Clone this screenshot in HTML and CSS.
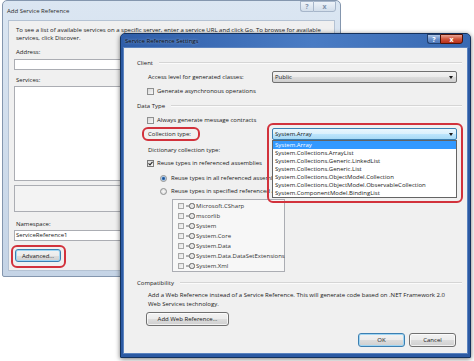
FILE: index.html
```html
<!DOCTYPE html>
<html>
    <head>
        <meta charset="utf-8">
        <link rel="stylesheet" href="styles.css">
    </head>
    <body>
        <div id="desktop">
            <div class="window back">
                <div class="titlebar">
                    <span class="title">Add Service Reference</span>
                    <div class="caption-btns">
                        <span class="cap-help">?</span>
                        <span class="cap-close">x</span>
                    </div>
                </div>
                <div class="client">
                    <p class="intro">To see a list of available services on a specific server, enter a service URL and click Go. To browse for available<br>services, click Discover.</p>
                    <div class="field-label address-label">Address:</div>
                    <div class="textbox address"></div>
                    <div class="field-label services-label">Services:</div>
                    <div class="listbox services"></div>
                    <div class="listbox status"></div>
                    <div class="field-label namespace-label">Namespace:</div>
                    <div class="textbox namespace">ServiceReference1</div>
                    <div class="callout-btn">
                        <button class="btn default advanced">Advanced...</button>
                    </div>
                </div>
            </div>

            <div class="window front">
                <div class="titlebar">
                    <span class="title">Service Reference Settings</span>
                    <div class="caption-btns">
                        <span class="cap-help">?</span>
                        <span class="cap-close">x</span>
                    </div>
                </div>
                <div class="client">
                    <div class="group-head"><span>Client</span><i class="rule"></i></div>
                    <div class="field-row">
                        <span class="label">Access level for generated classes:</span>
                        <div class="combo"><span>Public</span><i class="arrow"></i></div>
                    </div>
                    <div class="check-row"><i class="checkbox"></i><span>Generate asynchronous operations</span></div>

                    <div class="group-head data-type"><span>Data Type</span><i class="rule"></i></div>
                    <div class="check-row"><i class="checkbox"></i><span>Always generate message contracts</span></div>
                    <div class="field-row">
                        <span class="label"><span class="callout">Collection type:</span></span>
                        <div class="combo-wrap">
                            <div class="combo active"><span>System.Array</span><i class="arrow"></i></div>
                            <ul class="dropdown">
                                <li class="selected">System.Array</li>
                                <li>System.Collections.ArrayList</li>
                                <li>System.Collections.Generic.LinkedList</li>
                                <li>System.Collections.Generic.List</li>
                                <li>System.Collections.ObjectModel.Collection</li>
                                <li>System.Collections.ObjectModel.ObservableCollection</li>
                                <li>System.ComponentModel.BindingList</li>
                            </ul>
                            <i class="callout-ring"></i>
                        </div>
                    </div>
                    <div class="field-row dictionary">
                        <span class="label">Dictionary collection type:</span>
                        <div class="combo"><span></span><i class="arrow"></i></div>
                    </div>
                    <div class="check-row reuse">
                        <i class="checkbox checked"><svg width="5" height="5" viewBox="0 0 5 5"><path d="M0.5 2.4 L2 3.9 L4.5 0.8" fill="none" stroke="#2b2b2b" stroke-width="1.1"/></svg></i>
                        <span>Reuse types in referenced assemblies</span>
                    </div>
                    <div class="radio-row all"><i class="radio on"></i><span>Reuse types in all referenced assemblies</span></div>
                    <div class="radio-row specified"><i class="radio"></i><span>Reuse types in specified referenced assemblies</span></div>
                    <ul class="assemblies">
                        <li><i class="checkbox"></i><svg class="ref-icon" width="9" height="6" viewBox="0 0 9 6"><path d="M0 3 H3" stroke="#666" stroke-width="1"/><rect x="3.5" y="0.5" width="5" height="5" rx="2" fill="#e4e4e4" stroke="#666"/></svg><span>Microsoft.CSharp</span></li>
                        <li><i class="checkbox"></i><svg class="ref-icon" width="9" height="6" viewBox="0 0 9 6"><path d="M0 3 H3" stroke="#666" stroke-width="1"/><rect x="3.5" y="0.5" width="5" height="5" rx="2" fill="#e4e4e4" stroke="#666"/></svg><span>mscorlib</span></li>
                        <li><i class="checkbox"></i><svg class="ref-icon" width="9" height="6" viewBox="0 0 9 6"><path d="M0 3 H3" stroke="#666" stroke-width="1"/><rect x="3.5" y="0.5" width="5" height="5" rx="2" fill="#e4e4e4" stroke="#666"/></svg><span>System</span></li>
                        <li><i class="checkbox"></i><svg class="ref-icon" width="9" height="6" viewBox="0 0 9 6"><path d="M0 3 H3" stroke="#666" stroke-width="1"/><rect x="3.5" y="0.5" width="5" height="5" rx="2" fill="#e4e4e4" stroke="#666"/></svg><span>System.Core</span></li>
                        <li><i class="checkbox"></i><svg class="ref-icon" width="9" height="6" viewBox="0 0 9 6"><path d="M0 3 H3" stroke="#666" stroke-width="1"/><rect x="3.5" y="0.5" width="5" height="5" rx="2" fill="#e4e4e4" stroke="#666"/></svg><span>System.Data</span></li>
                        <li><i class="checkbox"></i><svg class="ref-icon" width="9" height="6" viewBox="0 0 9 6"><path d="M0 3 H3" stroke="#666" stroke-width="1"/><rect x="3.5" y="0.5" width="5" height="5" rx="2" fill="#e4e4e4" stroke="#666"/></svg><span>System.Data.DataSetExtensions</span></li>
                        <li><i class="checkbox"></i><svg class="ref-icon" width="9" height="6" viewBox="0 0 9 6"><path d="M0 3 H3" stroke="#666" stroke-width="1"/><rect x="3.5" y="0.5" width="5" height="5" rx="2" fill="#e4e4e4" stroke="#666"/></svg><span>System.Xml</span></li>
                    </ul>

                    <div class="group-head compat"><span>Compatibility</span><i class="rule"></i></div>
                    <p class="compat-text">Add a Web Reference instead of a Service Reference. This will generate code based on .NET Framework 2.0<br>Web Services technology.</p>
                    <button class="btn add-web">Add Web Reference...</button>

                    <div class="dialog-footer">
                        <button class="btn default">OK</button>
                        <button class="btn">Cancel</button>
                    </div>
                </div>
            </div>
        </div>
    </body>
</html>
```

FILE: styles.css
```css
body{
    margin:0;
    background:#fff;
    font-family: 'Open Sans', 'Noto Sans', sans-serif;
    font-size:6px;
    color:#1a1a1a;
}

#desktop{
    position: relative;
    width:474px;
    height:361px;
    overflow: hidden;
}

.window{
    position: absolute;
    display: flex;
    flex-direction: column;
    box-sizing: border-box;
}

.titlebar{
    display: flex;
    align-items: center;
    flex: none;
}

.caption-btns{
    display: flex;
    align-self: flex-start;
    margin-left: auto;
}

.caption-btns > span{
    box-sizing: border-box;
    display: flex;
    align-items: center;
    justify-content: center;
    font-size:7px;
    font-weight: 700;
    line-height: 1;
}

/* back window: inactive frame */

.back{
    left:2px;
    top:0;
    width:339px;
    height:277px;
    background: linear-gradient(#dbe6f2, #c5d4e6);
    border:1px solid #8496ae;
    border-radius: 5px 5px 2px 2px;
    padding: 0 5px 5px;
}

.back .titlebar{
    height:19px;
}

.back .title{
    margin-left:-1px;
    color:#2a2a2a;
}

.back .caption-btns{
    margin-right:-1px;
}

.back .caption-btns > span{
    height:11px;
    border:1px solid #a7b6ca;
    background: linear-gradient(#eef3f9, #d3deeb);
    color:#8394ac;
}

.back .cap-help{
    width:13px;
    border-radius: 0 0 0 3px;
    border-right:0 !important;
}

.back .cap-close{
    width:23px;
    border-radius: 0 0 3px 0;
}

.back .client{
    flex:1;
    background:#f0f0f0;
    border:1px solid #b4c2d3;
    padding: 5px 5px 0;
    display: flex;
    flex-direction: column;
    align-items: flex-start;
}

.intro{
    margin:0;
    padding-left:2px;
    line-height:8px;
    white-space: nowrap;
}

.field-label{
    padding-left:2px;
    line-height:8px;
}

.address-label{ margin-top:6px; }
.services-label{ margin-top:6px; }
.namespace-label{ margin-top:8px; }

.textbox{
    box-sizing: border-box;
    width:316px;
    height:11px;
    background:#fff;
    border:1px solid #abadb3;
    padding-left:1px;
    line-height:9px;
    margin-top:3px;
}

.textbox.namespace{
    margin-top:2px;
}

.listbox{
    box-sizing: border-box;
    width:316px;
    background:#fff;
    border:1px solid #abadb3;
}

.listbox.services{
    margin-top:2px;
    height:95px;
}

.listbox.status{
    margin-top:4px;
    height:27px;
    background:#f3f3f3;
}

.callout-btn{
    position: relative;
    margin: 8px 0 0 1px;
}

.callout-btn::after{
    content: "";
    position: absolute;
    top:-4px;
    left:-4px;
    right:-5px;
    bottom:-6px;
    border:2px solid #d2323c;
    border-radius: 6px;
}

.btn.advanced{
    width:46px;
    height:13px;
    display: block;
}

/* front window: active frame */

.front{
    left:120px;
    top:33px;
    width:351px;
    height:325px;
    background:#2c5aa3;
    border:1px solid #14315c;
    border-radius: 5px 5px 1px 1px;
    padding: 0 3px 4px;
    box-shadow: 0 1px 5px rgba(0,0,0,0.55);
}

.front .titlebar{
    height:14px;
    margin: 0 -3px;
    padding: 0 3px;
    background: linear-gradient(90deg, #2f5ea9, #4a7cc4 55%, #3869b2);
    border-radius: 4px 4px 0 0;
}

.front .title{
    margin-left:1px;
    color:#101010;
    text-shadow: 0 0 3px rgba(255,255,255,0.55);
}

.front .caption-btns{
    margin-right:4px;
}

.front .caption-btns > span{
    height:10px;
    color:#fff;
}

.front .cap-help{
    width:13px;
    border:1px solid #22406e;
    border-right:0;
    border-radius: 0 0 0 3px;
    background: linear-gradient(#b3c8e6, #6d93cc 50%, #4d76b8);
}

.front .cap-close{
    width:23px;
    border:1px solid #4e1208;
    border-radius: 0 0 3px 0;
    background: linear-gradient(#eaa494, #d0563c 50%, #b8301a);
}

.front .client{
    flex:1;
    background:#f0f0f0;
    box-shadow: 0 0 0 1px #5b83bf;
    padding: 8px 5px 0 13px;
    display: flex;
    flex-direction: column;
    align-items: flex-start;
}

.group-head{
    display: flex;
    align-items: center;
    align-self: stretch;
    height:14px;
}

.group-head > .rule{
    flex:1;
    margin-left:6px;
    border-top:1px solid #d5d5d5;
    border-bottom:1px solid #fbfbfb;
}

.group-head.data-type{ margin-top:1px; }
.group-head.compat{ margin-top:4px; }

.field-row{
    display: flex;
    align-items: center;
    height:14px;
    padding-left:11px;
}

.field-row > .label{
    width:124px;
    flex: none;
}

.field-row.dictionary{ margin-top:2px; }

.combo{
    box-sizing: border-box;
    width:185px;
    height:12px;
    border:1px solid #707070;
    border-radius: 2px;
    background: linear-gradient(#f2f2f2, #ebebeb 50%, #dddddd 50%, #cfcfcf);
    display: flex;
    align-items: center;
    padding: 0 3px 0 2px;
}

.combo > span{
    flex:1;
}

.combo > .arrow{
    width:0;
    height:0;
    border-left:2px solid transparent;
    border-right:2px solid transparent;
    border-top:3px solid #1a1a1a;
}

.combo.active{
    border-color:#3c7fb1;
    background: linear-gradient(#eaf6fd, #d9f0fc 50%, #bee6fd 50%, #a7d9f5);
}

.combo-wrap{
    position: relative;
    z-index: 2;
}

.dropdown{
    position: absolute;
    top:100%;
    left:0;
    right:0;
    margin:0;
    padding:0;
    list-style: none;
    background:#fff;
    border:1px solid #646464;
}

.dropdown > li{
    height:8px;
    line-height:8px;
    padding-left:2px;
    white-space: nowrap;
}

.dropdown > li.selected{
    background:#3399ff;
    color:#fff;
}

.callout-ring{
    position: absolute;
    top:-5px;
    left:-5px;
    right:-6px;
    height:80px;
    box-sizing: border-box;
    border:2px solid #d2323c;
    border-radius: 6px;
    pointer-events: none;
}

.callout{
    position: relative;
    display: inline-block;
    line-height:8px;
}

.callout::after{
    content: "";
    position: absolute;
    top:-3px;
    bottom:-3px;
    left:-6px;
    right:-9px;
    border:2px solid #d2323c;
    border-radius: 6px;
}

.check-row, .radio-row{
    display: flex;
    align-items: center;
    height:14px;
    white-space: nowrap;
}

.check-row{
    padding-left:10px;
    gap:3px;
}

.check-row.reuse{ margin-top:-1px; }

/* the open dropdown hides the rest of these labels */
.radio-row{
    box-sizing: border-box;
    width:135px;
    overflow: hidden;
    padding-left:23px;
    gap:4px;
}

.radio-row.all{ margin-top:1px; }
.radio-row.specified{ margin-top:-1px; }

.checkbox{
    box-sizing: border-box;
    width:7px;
    height:7px;
    flex: none;
    border:1px solid #8e8f8f;
    background: linear-gradient(135deg, #d9d9d9, #f8f8f8);
    display: flex;
    align-items: center;
    justify-content: center;
}

.checkbox.checked{
    border-color:#7a7a7a;
}

.radio{
    box-sizing: border-box;
    width:7px;
    height:7px;
    flex: none;
    border:1px solid #8e8f8f;
    border-radius: 50%;
    background: radial-gradient(circle, #f8f8f8, #d6d6d6);
}

.radio.on{
    background: radial-gradient(circle, #1d4c86 0, #2f6bb0 1.2px, #a8c6e8 2px, #eef3f9 2.6px);
}

.assemblies{
    box-sizing: border-box;
    width:113px;
    height:73px;
    margin: 1px 0 0 35px;
    padding: 1px 0 0 5px;
    list-style: none;
    background:#f7f7f7;
    border:1px solid #abadb3;
    color:#333;
}

.assemblies > li{
    display: flex;
    align-items: center;
    height:10px;
    white-space: nowrap;
}

.assemblies .checkbox{
    width:6px;
    height:6px;
    border-color:#a8a8a8;
    background: linear-gradient(135deg, #e2e2e2, #f7f7f7);
}

.assemblies .ref-icon{
    margin: 0 1px 0 2px;
    flex: none;
}

.compat-text{
    margin: 1px 0 0;
    padding-left:11px;
    line-height:9px;
    white-space: nowrap;
}

.btn{
    box-sizing: border-box;
    font: inherit;
    color:#1a1a1a;
    height:14px;
    padding:0;
    border:1px solid #707070;
    border-radius: 3px;
    background: linear-gradient(#f2f2f2, #ebebeb 50%, #dddddd 50%, #cfcfcf);
    box-shadow: inset 0 0 0 1px rgba(255,255,255,0.7);
}

.btn.default{
    border-color:#3c7fb1;
    box-shadow: inset 0 0 0 1px #9fd5f3;
}

.btn.add-web{
    width:83px;
    margin: 3px 0 0 9px;
}

.dialog-footer{
    display: flex;
    justify-content: flex-end;
    gap:4px;
    align-self: stretch;
    margin-top:7px;
    padding-right:6px;
}

.dialog-footer > .btn{
    width:47px;
}
```
